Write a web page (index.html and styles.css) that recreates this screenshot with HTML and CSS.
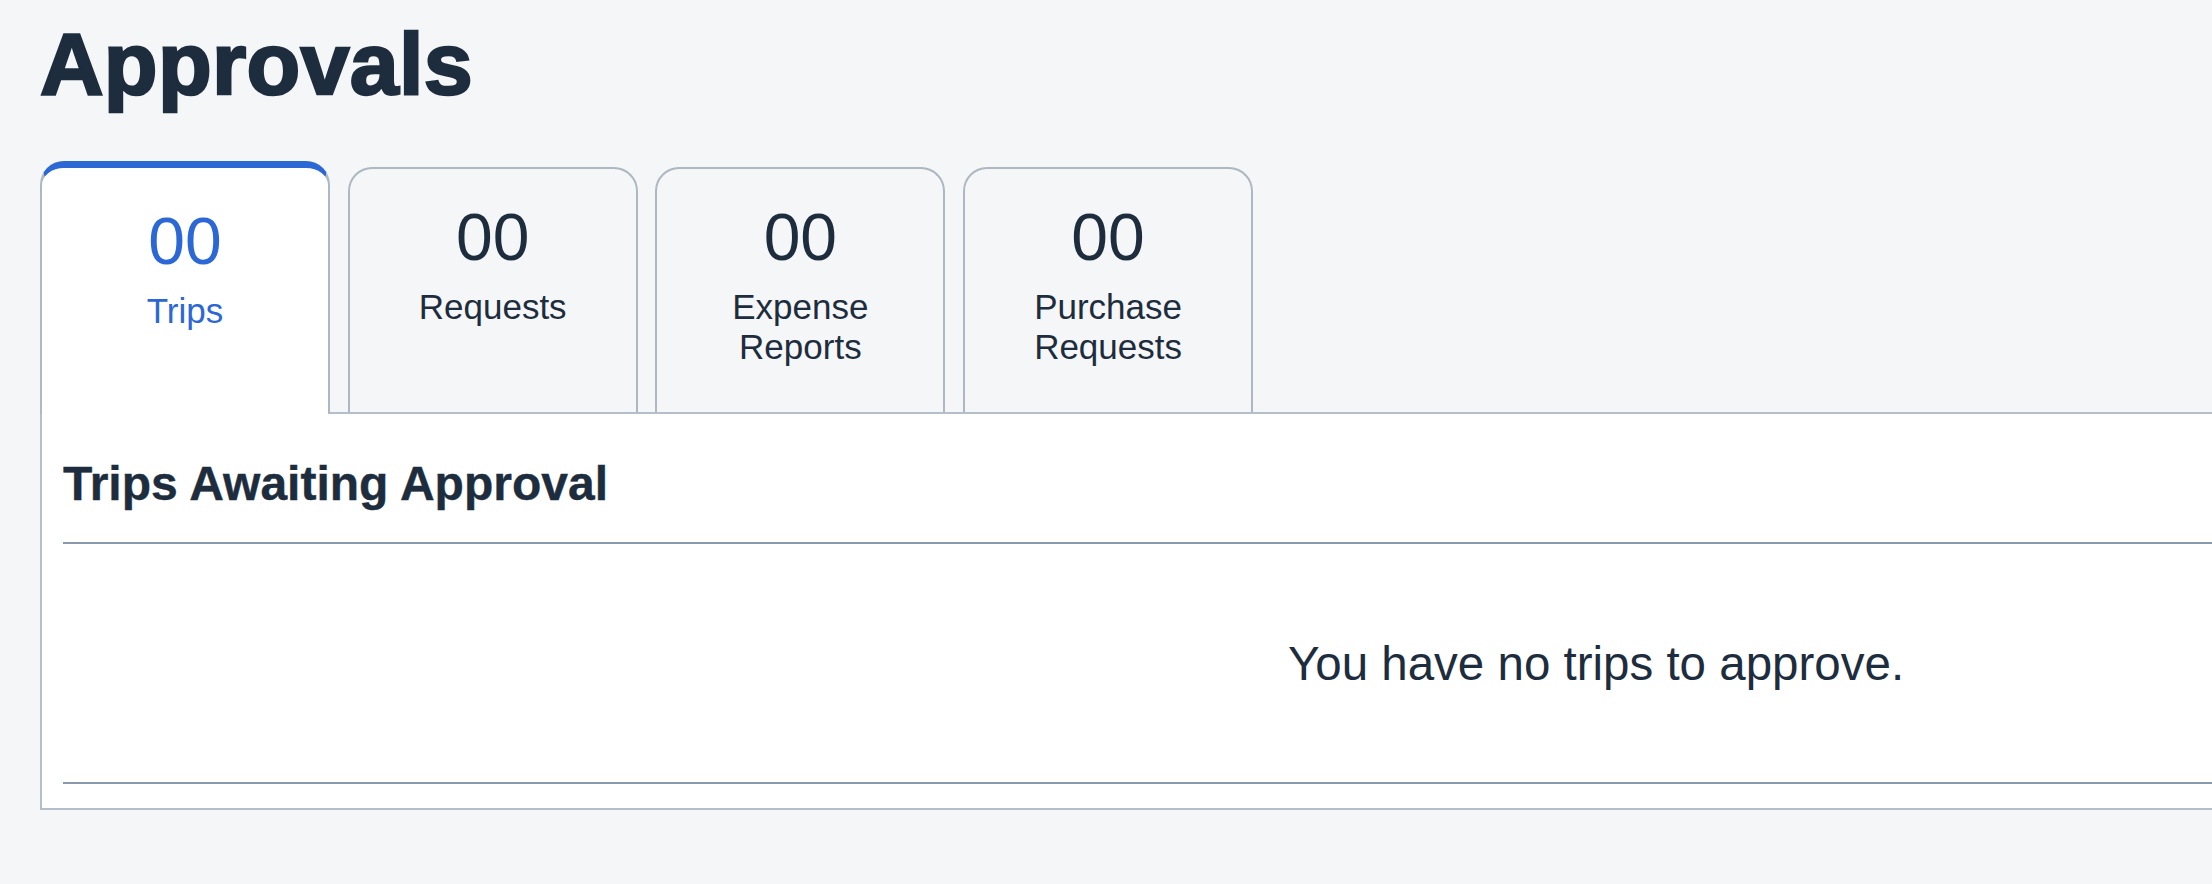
FILE: index.html
```html
<!DOCTYPE html>
<html lang="en">
<head>
<meta charset="utf-8">
<title>Approvals</title>
<link rel="stylesheet" href="styles.css">
</head>
<body>
<div class="page">
  <h1 class="title">Approvals</h1>
  <div class="tabs">
    <div class="tab active">
      <div class="count">00</div>
      <div class="label">Trips</div>
    </div>
    <div class="tab">
      <div class="count">00</div>
      <div class="label">Requests</div>
    </div>
    <div class="tab">
      <div class="count">00</div>
      <div class="label">Expense<br>Reports</div>
    </div>
    <div class="tab">
      <div class="count">00</div>
      <div class="label">Purchase<br>Requests</div>
    </div>
  </div>
  <section class="panel">
    <h2 class="panel-title">Trips Awaiting Approval</h2>
    <div class="empty">You have no trips to approve.</div>
  </section>
</div>
</body>
</html>
```
FILE: styles.css
```css
html, body {
  margin: 0;
  background: #f5f6f7;
}

.page {
  padding: 14px 0 0 40px;
  font-family: "Liberation Sans", Arial, sans-serif;
  color: #1d2d3e;
}

.title {
  margin: 0;
  font-size: 88px;
  line-height: 100px;
  font-weight: 700;
  letter-spacing: 0.3px;
  -webkit-text-stroke: 2.5px #1d2d3e;
}

.tabs {
  display: flex;
  align-items: flex-end;
  gap: 17.7px;
  margin-top: 47px;
  position: relative;
  z-index: 1;
}

.tab {
  width: 290px;
  height: 245px;
  box-sizing: border-box;
  border: 2px solid #aeb8c2;
  border-bottom: none;
  border-radius: 24px 24px 0 0;
  background: #f5f6f7;
  padding-top: 28px;
  text-align: center;
}

.tab.active {
  height: 253px;
  border-top: 7px solid #2b68d6;
  background: #ffffff;
  padding-top: 33px;
  margin-bottom: -2px;
  color: #2b68d6;
}

.count {
  font-size: 66px;
  line-height: 80px;
}

.label {
  font-size: 35px;
  line-height: 40px;
  margin-top: 10px;
}

.panel {
  box-sizing: border-box;
  background: #ffffff;
  border: 2px solid #b5bfc9;
  border-right: none;
  padding: 0 0 24px 21px;
}

.panel-title {
  margin: 0;
  padding: 42px 0 30px;
  font-size: 48px;
  line-height: 56px;
  font-weight: 700;
  -webkit-text-stroke: 0.4px #1d2d3e;
  border-bottom: 2px solid #8799ad;
}

.empty {
  height: 238px;
  display: flex;
  align-items: center;
  justify-content: center;
  padding-left: 917px;
  border-bottom: 2px solid #8799ad;
  font-size: 47.5px;
}
```
